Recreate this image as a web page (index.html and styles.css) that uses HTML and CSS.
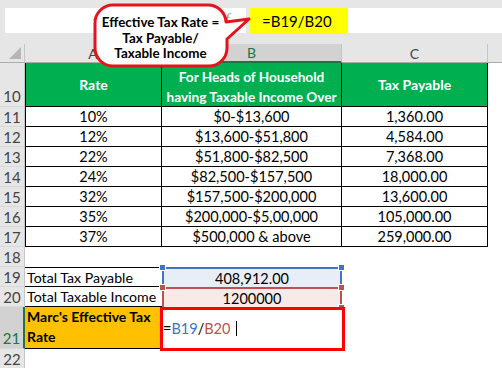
FILE: index.html
```html
<!DOCTYPE html>
<html>
<head>
<meta charset="utf-8">
<link rel="stylesheet" href="styles.css">
</head>
<body>
<div class="app">
  <div class="fbar">
    <div class="namebox"><span class="dd"></span><span class="fx"><i>f</i><small>x</small></span></div>
    <div class="finput"><span class="fhl">=B19/B20</span></div>
  </div>
  <div class="sheet">
    <div class="corner"><span class="tri"></span></div>
    <div class="ch">A</div><div class="ch sel">B</div><div class="ch">C</div><div class="ch last"></div>

    <div class="rh bot">10</div>
    <div class="c t th first">Rate</div>
    <div class="c t th wrap">For Heads of Household<br>having Taxable Income Over</div>
    <div class="c t th">Tax Payable</div>
    <div class="c"></div>

    <div class="rh">11</div><div class="c t first">10%</div><div class="c t">$0-$13,600</div><div class="c t">1,360.00</div><div class="c"></div>
    <div class="rh">12</div><div class="c t first">12%</div><div class="c t">$13,600-$51,800</div><div class="c t">4,584.00</div><div class="c"></div>
    <div class="rh">13</div><div class="c t first">22%</div><div class="c t">$51,800-$82,500</div><div class="c t">7,368.00</div><div class="c"></div>
    <div class="rh">14</div><div class="c t first">24%</div><div class="c t">$82,500-$157,500</div><div class="c t">18,000.00</div><div class="c"></div>
    <div class="rh">15</div><div class="c t first">32%</div><div class="c t">$157,500-$200,000</div><div class="c t">13,600.00</div><div class="c"></div>
    <div class="rh">16</div><div class="c t first">35%</div><div class="c t">$200,000-$5,00,000</div><div class="c t">105,000.00</div><div class="c"></div>
    <div class="rh">17</div><div class="c t first">37%</div><div class="c t">$500,000 &amp; above</div><div class="c t">259,000.00</div><div class="c"></div>

    <div class="rh">18</div><div class="c"></div><div class="c"></div><div class="c"></div><div class="c"></div>

    <div class="rh">19</div>
    <div class="c lbl top">Total Tax Payable</div>
    <div class="c ref blue">408,912.00<span class="h tl"></span><span class="h tr"></span></div>
    <div class="c"></div><div class="c"></div>

    <div class="rh">20</div>
    <div class="c lbl">Total Taxable Income</div>
    <div class="c ref red">1200000<span class="h tl"></span><span class="h tr"></span><span class="h br"></span></div>
    <div class="c"></div><div class="c"></div>

    <div class="rh bot selrow">21</div>
    <div class="c gold">Marc's Effective Tax<br>Rate</div>
    <div class="c edit"><span>=</span><span class="rb">B19</span><span>/</span><span class="rr">B20</span><span class="cursor"></span></div>
    <div class="c"></div><div class="c"></div>

    <div class="rh">22</div><div class="c"></div><div class="c"></div><div class="c"></div><div class="c"></div>
  </div>

  <div class="bubble">
    <svg width="165" height="72" viewBox="0 0 165 72">
      <path d="M23 5 H118 A18 18 0 0 1 136 22 L159 19 L137 39 V48 A18 18 0 0 1 118 66 H23 A18 18 0 0 1 5 48 V23 A18 18 0 0 1 23 5 Z" fill="#fff" stroke="#e3151b" stroke-width="3" stroke-linejoin="round"/>
    </svg>
    <div class="btext">Effective Tax Rate =<br>Tax Payable/<br>Taxable Income</div>
  </div>
</div>
</body>
</html>
```

FILE: styles.css
```css
html, body {
  margin: 0;
  padding: 0;
  background: #fff;
}
.app {
  position: relative;
  width: 502px;
  height: 368px;
  overflow: hidden;
  font-family: Lato, "Liberation Sans", sans-serif;
  color: #000;
}
.fbar {
  height: 44px;
  box-sizing: border-box;
  background: #e6e6e6;
  padding-top: 8px;
  display: flex;
  align-items: flex-start;
}
.namebox {
  position: relative;
  margin-left: 5px;
  width: 241px;
  height: 25px;
  background: #fff;
}
.dd {
  position: absolute;
  left: 88px;
  top: 11px;
  width: 0;
  height: 0;
  border-left: 3px solid transparent;
  border-right: 3px solid transparent;
  border-top: 3px solid #777;
}
.fx {
  position: absolute;
  left: 220px;
  top: 3px;
  color: #8a8a8a;
  font-family: "Liberation Serif", serif;
  font-size: 15px;
}
.fx small {
  font-size: 9px;
  font-style: italic;
}
.finput {
  margin-left: 4px;
  flex: 1;
  height: 25px;
  background: #fff;
}
.fhl {
  display: block;
  width: 98px;
  height: 26px;
  box-sizing: border-box;
  padding-left: 12px;
  background: #ffff00;
  font-size: 15px;
  line-height: 26px;
}
.sheet {
  display: grid;
  grid-template-columns: 25px 137px 180px 146px 1fr;
  grid-template-rows: 19px 44px repeat(10, 20px) 42px 20px;
}
.corner {
  position: relative;
  background: #e6e6e6;
  border-right: 1px solid #c6c6c6;
  border-bottom: 1px solid #ababab;
  box-sizing: border-box;
}
.tri {
  position: absolute;
  right: 3px;
  bottom: 3px;
  width: 0;
  height: 0;
  border-left: 12px solid transparent;
  border-bottom: 12px solid #b5b5b5;
}
.ch {
  background: #e6e6e6;
  border-right: 1px solid #c6c6c6;
  border-bottom: 1px solid #ababab;
  box-sizing: border-box;
  display: flex;
  align-items: center;
  justify-content: center;
  font-size: 14px;
  color: #444;
}
.ch.sel {
  background: #d2d2d2;
  border-bottom: 2px solid #217346;
  color: #217346;
}
.ch.last {
  border-right: none;
}
.rh {
  background: #e6e6e6;
  border-right: 1px solid #c6c6c6;
  border-bottom: 1px solid #d8d8d8;
  box-sizing: border-box;
  display: flex;
  align-items: center;
  justify-content: center;
  font-size: 15px;
  color: #444;
}
.rh.bot {
  align-items: flex-end;
  padding-bottom: 1px;
}
.rh.selrow {
  background: #d2d2d2;
  color: #217346;
  border-right: 2px solid #217346;
}
.c {
  box-sizing: border-box;
  font-size: 14.5px;
  display: flex;
  align-items: center;
  white-space: nowrap;
}
.c.t {
  justify-content: center;
  border-right: 1px solid #000;
  border-bottom: 1px solid #000;
}
.c.first {
  border-left: 1px solid #000;
}
.c.th {
  background: #00b050;
  color: #fff;
  font-weight: bold;
  font-size: 14px;
  text-align: center;
  line-height: 20px;
}
.c.th.wrap {
  padding-top: 4px;
  font-size: 13.6px;
}
.c.lbl {
  padding-left: 2px;
  border-bottom: 1px solid #000;
  font-size: 14.2px;
}
.c.lbl.top {
  border-top: 1px solid #000;
}
.c.ref {
  position: relative;
  justify-content: center;
  border: 2px solid;
  border-bottom: none;
}
.c.blue {
  background: #e8eef8;
  border-color: #4472c4;
}
.c.red {
  background: #f9eaea;
  border-color: #c0504d;
}
.h {
  position: absolute;
  width: 5px;
  height: 5px;
  border: 1px solid #fff;
  box-sizing: content-box;
}
.blue .h { background: #4472c4; }
.red .h { background: #c0504d; }
.h.tl { left: -5px; top: -5px; }
.h.tr { right: -5px; top: -5px; }
.h.br { right: -5px; bottom: -4px; }
.c.gold {
  background: #ffc000;
  font-weight: bold;
  font-size: 14px;
  align-items: flex-end;
  line-height: 20px;
  padding-left: 2px;
  padding-bottom: 1px;
  border-bottom: 1px solid #000;
}
.c.edit {
  position: relative;
  padding-left: 1px;
}
.c.edit::after {
  content: "";
  position: absolute;
  left: -2px;
  right: -3px;
  top: 0;
  bottom: -2px;
  border: 3px solid #ff0000;
}
.rb { color: #4472c4; }
.rr { color: #c0504d; }
.cursor {
  display: inline-block;
  width: 1px;
  height: 15px;
  background: #000;
  margin-left: 6px;
}
.bubble {
  position: absolute;
  left: 90px;
  top: 0;
  width: 165px;
  height: 72px;
}
.bubble svg {
  display: block;
}
.btext {
  position: absolute;
  left: 5px;
  top: 15px;
  width: 131px;
  text-align: center;
  font-weight: bold;
  font-size: 13.4px;
  line-height: 15.5px;
}
```
